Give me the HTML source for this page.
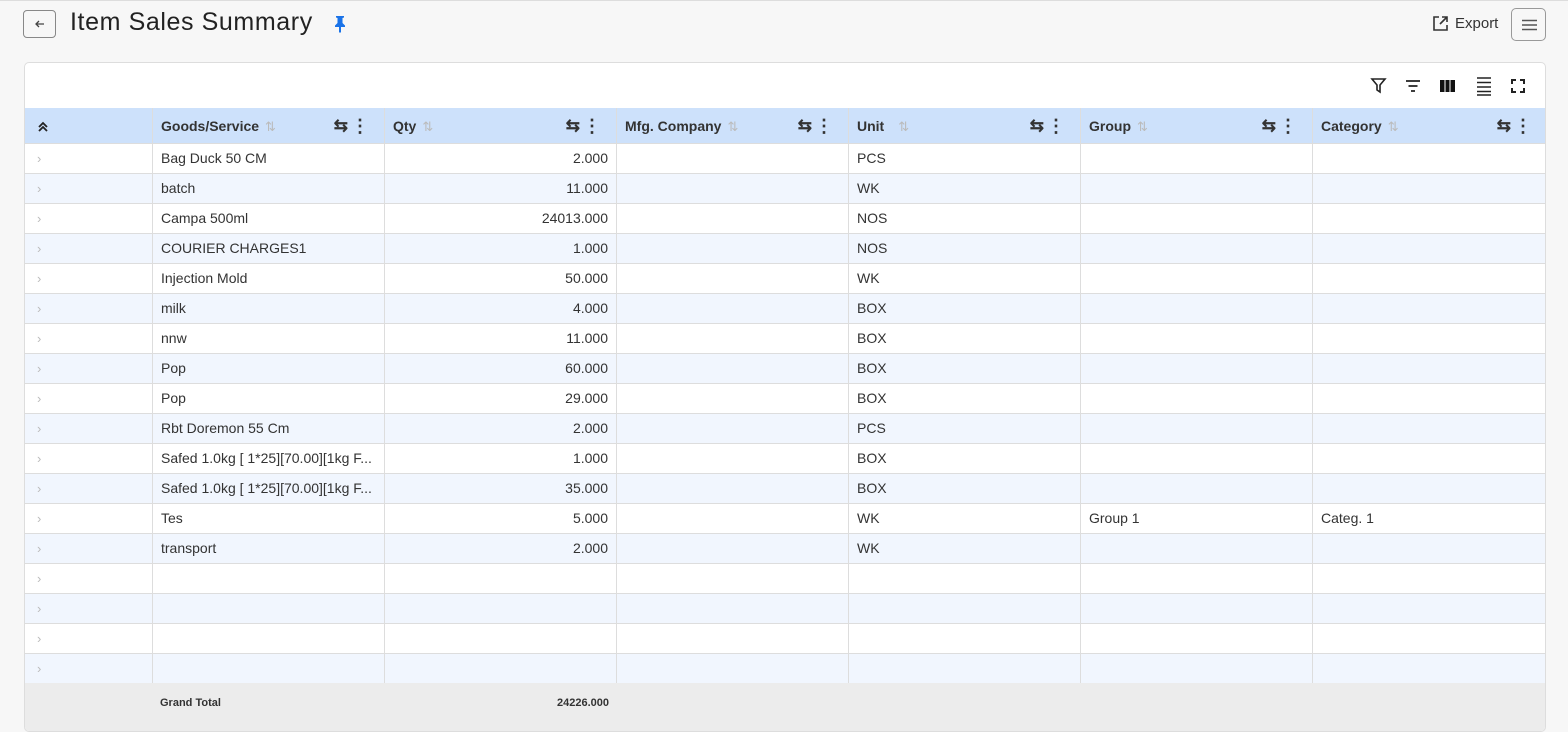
<!DOCTYPE html>
<html><head><style>
*{box-sizing:border-box;margin:0;padding:0}
body{width:1568px;height:724px;background:#f7f7f7;font-family:"Liberation Sans",sans-serif;color:#333;position:relative;overflow:hidden}
.topline{position:absolute;left:0;top:0;width:1568px;height:1px;background:#ddd}
.back{position:absolute;left:23px;top:10px;width:33px;height:28px;border:1px solid #888;border-radius:4px;background:#f7f7f7;display:flex;align-items:center;justify-content:center}
h1{position:absolute;left:70px;top:8px;font-size:25px;font-weight:400;color:#222;letter-spacing:0.6px}
.card{position:absolute;left:24px;top:62px;width:1522px;height:670px;background:#fff;border:1px solid #ddd;border-radius:5px;overflow:hidden}
.row{position:absolute;left:0;width:1522px;height:30px;border-bottom:1px solid #ddd;font-size:14px}
.row div{position:absolute;top:0;height:30px;line-height:29px;border-right:1px solid #ddd;padding:0 8px;white-space:nowrap;overflow:hidden}
.hd{background:#cde1fb;height:36px;top:45px;font-weight:700;font-size:14px;color:#333}
.hd div{height:36px;line-height:36px}
.alt{background:#f1f6fe}
.r{text-align:right}
.c0{left:0;width:128px}.c1{left:128px;width:232px}.c2{left:360px;width:232px}.c3{left:592px;width:232px}.c4{left:824px;width:232px}.c5{left:1056px;width:232px}.c6{left:1288px;width:234px;border-right:none!important}
.chev{color:#bbb;font-size:13px;padding-left:12px!important}
.sw{position:absolute;right:36px;top:0;font-size:17px}
.dt{position:absolute;right:15px;top:0;font-size:18px;font-weight:900}
.srt{color:#bbb;font-weight:400;font-size:13px;margin-left:6px}
.foot{position:absolute;left:0;top:620px;width:1522px;height:50px;background:#ececec;font-size:11px;font-weight:700}
</style></head><body>
<div class="topline"></div>
<div class="back"><svg width="12" height="12" viewBox="0 0 12 12"><path d="M10 6H2M5 3L2 6l3 3" stroke="#444" fill="none" stroke-width="1.3"/></svg></div>
<h1>Item Sales Summary</h1>
<svg style="position:absolute;left:333px;top:15px" width="14" height="18" viewBox="0 0 14 18"><path d="M3 1h8v1.5L9.5 3v5l2.5 2.5V12H8v5.5H6V12H2v-1.5L4.5 8V3L3 2.5z" fill="#1a73e8"/></svg>
<svg style="position:absolute;left:1432px;top:15px" width="17" height="17" viewBox="0 0 17 17"><path d="M7 2H2v13h13v-5M10 2h5v5M15 2L8 9" stroke="#333" fill="none" stroke-width="1.6"/></svg>
<div style="position:absolute;left:1455px;top:15px;font-size:15px;color:#333">Export</div>
<div style="position:absolute;left:1511px;top:8px;width:35px;height:33px;border:1px solid #999;border-radius:5px;background:#f7f7f7"><svg width="35" height="33" viewBox="0 0 35 33"><path d="M10 11.5h15M10 16h15M10 20.5h15" stroke="#555" stroke-width="1.5"/></svg></div>
<div class="card">
<svg style="position:absolute;left:1345px;top:13px" width="160" height="20" viewBox="0 0 160 20">
<path d="M2 3h13l-5 6v7l-3-2V9z" stroke="#222" fill="none" stroke-width="1.6"/>
<path d="M36 5h14M38.5 10h9M41 15h4" stroke="#222" stroke-width="1.7"/>
<path d="M70 4h15v12H70z" fill="#111"/><path d="M75 4v12M80 4v12" stroke="#fff" stroke-width="1"/>
<path d="M107 2h14M107 6.5h14M107 11h14M107 15.5h14M107 19h14" stroke="#222" stroke-width="1.4"/>
<path d="M142 8V4h4M150 4h4v4M154 12v4h-4M146 16h-4v-4" stroke="#222" fill="none" stroke-width="2"/>
</svg>
<div class="row hd"><div class="c0" style="padding-left:12px"><svg width="12" height="12" viewBox="0 0 12 12" style="vertical-align:middle"><path d="M2 6l4-4 4 4M2 10l4-4 4 4" stroke="#222" fill="none" stroke-width="1.8"/></svg></div>
<div class="c1">Goods/Service<span class="srt">⇅</span><span class="sw">⇆</span><span class="dt">⋮</span></div>
<div class="c2">Qty<span class="srt">⇅</span><span class="sw">⇆</span><span class="dt">⋮</span></div>
<div class="c3">Mfg. Company<span class="srt">⇅</span><span class="sw">⇆</span><span class="dt">⋮</span></div>
<div class="c4">Unit<span class="srt" style="margin-left:14px">⇅</span><span class="sw">⇆</span><span class="dt">⋮</span></div>
<div class="c5">Group<span class="srt">⇅</span><span class="sw">⇆</span><span class="dt">⋮</span></div>
<div class="c6">Category<span class="srt">⇅</span><span class="sw">⇆</span><span class="dt">⋮</span></div></div>
<div class="row" style="top:81px"><div class="c0 chev">›</div><div class="c1">Bag Duck 50 CM</div><div class="c2 r">2.000</div><div class="c3"></div><div class="c4">PCS</div><div class="c5"></div><div class="c6"></div></div>
<div class="row alt" style="top:111px"><div class="c0 chev">›</div><div class="c1">batch</div><div class="c2 r">11.000</div><div class="c3"></div><div class="c4">WK</div><div class="c5"></div><div class="c6"></div></div>
<div class="row" style="top:141px"><div class="c0 chev">›</div><div class="c1">Campa 500ml</div><div class="c2 r">24013.000</div><div class="c3"></div><div class="c4">NOS</div><div class="c5"></div><div class="c6"></div></div>
<div class="row alt" style="top:171px"><div class="c0 chev">›</div><div class="c1">COURIER CHARGES1</div><div class="c2 r">1.000</div><div class="c3"></div><div class="c4">NOS</div><div class="c5"></div><div class="c6"></div></div>
<div class="row" style="top:201px"><div class="c0 chev">›</div><div class="c1">Injection Mold</div><div class="c2 r">50.000</div><div class="c3"></div><div class="c4">WK</div><div class="c5"></div><div class="c6"></div></div>
<div class="row alt" style="top:231px"><div class="c0 chev">›</div><div class="c1">milk</div><div class="c2 r">4.000</div><div class="c3"></div><div class="c4">BOX</div><div class="c5"></div><div class="c6"></div></div>
<div class="row" style="top:261px"><div class="c0 chev">›</div><div class="c1">nnw</div><div class="c2 r">11.000</div><div class="c3"></div><div class="c4">BOX</div><div class="c5"></div><div class="c6"></div></div>
<div class="row alt" style="top:291px"><div class="c0 chev">›</div><div class="c1">Pop</div><div class="c2 r">60.000</div><div class="c3"></div><div class="c4">BOX</div><div class="c5"></div><div class="c6"></div></div>
<div class="row" style="top:321px"><div class="c0 chev">›</div><div class="c1">Pop</div><div class="c2 r">29.000</div><div class="c3"></div><div class="c4">BOX</div><div class="c5"></div><div class="c6"></div></div>
<div class="row alt" style="top:351px"><div class="c0 chev">›</div><div class="c1">Rbt Doremon 55 Cm</div><div class="c2 r">2.000</div><div class="c3"></div><div class="c4">PCS</div><div class="c5"></div><div class="c6"></div></div>
<div class="row" style="top:381px"><div class="c0 chev">›</div><div class="c1">Safed 1.0kg [ 1*25][70.00][1kg F...</div><div class="c2 r">1.000</div><div class="c3"></div><div class="c4">BOX</div><div class="c5"></div><div class="c6"></div></div>
<div class="row alt" style="top:411px"><div class="c0 chev">›</div><div class="c1">Safed 1.0kg [ 1*25][70.00][1kg F...</div><div class="c2 r">35.000</div><div class="c3"></div><div class="c4">BOX</div><div class="c5"></div><div class="c6"></div></div>
<div class="row" style="top:441px"><div class="c0 chev">›</div><div class="c1">Tes</div><div class="c2 r">5.000</div><div class="c3"></div><div class="c4">WK</div><div class="c5">Group 1</div><div class="c6">Categ. 1</div></div>
<div class="row alt" style="top:471px"><div class="c0 chev">›</div><div class="c1">transport</div><div class="c2 r">2.000</div><div class="c3"></div><div class="c4">WK</div><div class="c5"></div><div class="c6"></div></div>
<div class="row" style="top:501px"><div class="c0 chev">›</div><div class="c1"></div><div class="c2"></div><div class="c3"></div><div class="c4"></div><div class="c5"></div><div class="c6"></div></div>
<div class="row alt" style="top:531px"><div class="c0 chev">›</div><div class="c1"></div><div class="c2"></div><div class="c3"></div><div class="c4"></div><div class="c5"></div><div class="c6"></div></div>
<div class="row" style="top:561px"><div class="c0 chev">›</div><div class="c1"></div><div class="c2"></div><div class="c3"></div><div class="c4"></div><div class="c5"></div><div class="c6"></div></div>
<div class="row alt" style="top:591px"><div class="c0 chev">›</div><div class="c1"></div><div class="c2"></div><div class="c3"></div><div class="c4"></div><div class="c5"></div><div class="c6"></div></div>
<div class="foot"><span style="position:absolute;left:135px;top:14px">Grand Total</span><span style="position:absolute;right:938px;top:14px">24226.000</span></div>
</div>
</body></html>
